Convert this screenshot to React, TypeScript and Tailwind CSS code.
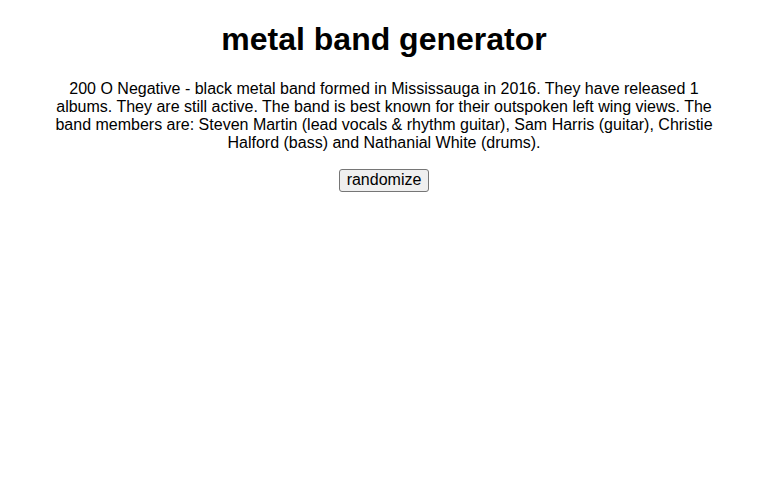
export default function App() {
  return (
    <div className="min-h-[480px] bg-white text-black px-12 text-center" style={{ fontFamily: '"Liberation Sans", Arial, sans-serif' }}>
      <div className="pt-[21px]">
        <h1 className="text-[32px] leading-[37px] font-bold m-0">metal band generator</h1>
        <p className="text-[16px] leading-[18px] mt-[22px]">
          200 O Negative - black metal band formed in Mississauga in 2016. They have released 1 albums. They are still active. The band is best known for their outspoken left wing views. The band members are: Steven Martin (lead vocals &amp; rhythm guitar), Sam Harris (guitar), Christie Halford (bass) and Nathanial White (drums).
        </p>
        <div className="mt-4">
          <button className="text-[16px] leading-[18px] h-[23px] px-[7px] border border-[#767676] bg-[#efefef] rounded-[3px] text-black">
            randomize
          </button>
        </div>
      </div>
    </div>
  );
}
